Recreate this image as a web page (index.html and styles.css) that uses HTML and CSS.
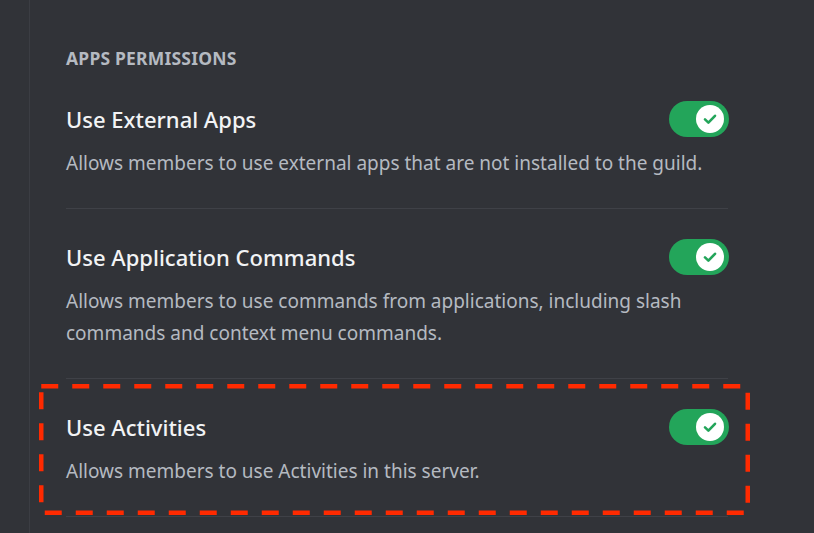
FILE: index.html
```html
<!DOCTYPE html>
<html lang="en">
<head>
<meta charset="utf-8">
<link rel="stylesheet" href="styles.css">
</head>
<body>
<div class="layout">
  <aside class="side"></aside>
  <main class="main">
    <h2 class="eyebrow">APPS PERMISSIONS</h2>
    <section class="row first">
      <div class="row-top">
        <span class="title">Use External Apps</span>
        <span class="toggle"><span class="knob"><svg viewBox="0 0 16 16" width="16" height="16"><path d="M3 8.4 L6.4 11.6 L13 4.8" fill="none" stroke="#23a55a" stroke-width="2.6" stroke-linecap="round" stroke-linejoin="round"/></svg></span></span>
      </div>
      <p class="desc">Allows members to use external apps that are not installed to the guild.</p>
    </section>
    <section class="row">
      <div class="row-top">
        <span class="title">Use Application Commands</span>
        <span class="toggle"><span class="knob"><svg viewBox="0 0 16 16" width="16" height="16"><path d="M3 8.4 L6.4 11.6 L13 4.8" fill="none" stroke="#23a55a" stroke-width="2.6" stroke-linecap="round" stroke-linejoin="round"/></svg></span></span>
      </div>
      <p class="desc">Allows members to use commands from applications, including slash commands and context menu commands.</p>
    </section>
    <section class="row marked">
      <div class="row-top">
        <span class="title">Use Activities</span>
        <span class="toggle"><span class="knob"><svg viewBox="0 0 16 16" width="16" height="16"><path d="M3 8.4 L6.4 11.6 L13 4.8" fill="none" stroke="#23a55a" stroke-width="2.6" stroke-linecap="round" stroke-linejoin="round"/></svg></span></span>
      </div>
      <p class="desc">Allows members to use Activities in this server.</p>
      <svg class="highlight" width="711" height="131" viewBox="0 0 711 131"><rect x="2.25" y="2.25" width="706.5" height="126.5" fill="none" stroke="#ff2a00" stroke-width="4.5" stroke-dasharray="17 14"/></svg>
    </section>
  </main>
</div>
</body>
</html>
```
FILE: styles.css
```css
* { box-sizing: border-box; }
html, body { margin: 0; padding: 0; height: 100%; }
body {
  background: #313338;
  font-family: "Noto Sans", "Open Sans", sans-serif;
  overflow: hidden;
}
.layout { display: flex; height: 533px; }
.side { width: 30px; border-right: 1px solid #3b3d43; flex: none; }
.main { padding: 48px 0 0 36px; width: 698px; }
.eyebrow {
  margin: 0 0 33px;
  font-size: 17.5px;
  line-height: 20px;
  font-weight: 700;
  color: #b5bac1;
  letter-spacing: 0.2px;
}
.row { padding: 30px 0 29px; border-bottom: 1px solid #3f4147; position: relative; }
.row.first { padding-top: 0; }
.row-top { display: flex; align-items: center; justify-content: space-between; height: 36px; }
.title { font-size: 22px; font-weight: 500; color: #f2f3f5; }
.toggle {
  width: 60px; height: 36px; border-radius: 18px; background: #23a55a;
  display: flex; align-items: center; justify-content: flex-end; padding-right: 5px;
  margin-right: -1px;
}
.knob {
  width: 28px; height: 28px; border-radius: 50%; background: #fff;
  display: flex; align-items: center; justify-content: center;
}
.desc {
  margin: 10px 0 0;
  font-size: 19px;
  line-height: 32px;
  color: #b5bac1;
  max-width: 640px;
}
.highlight { position: absolute; left: -27px; top: 5px; }
```
